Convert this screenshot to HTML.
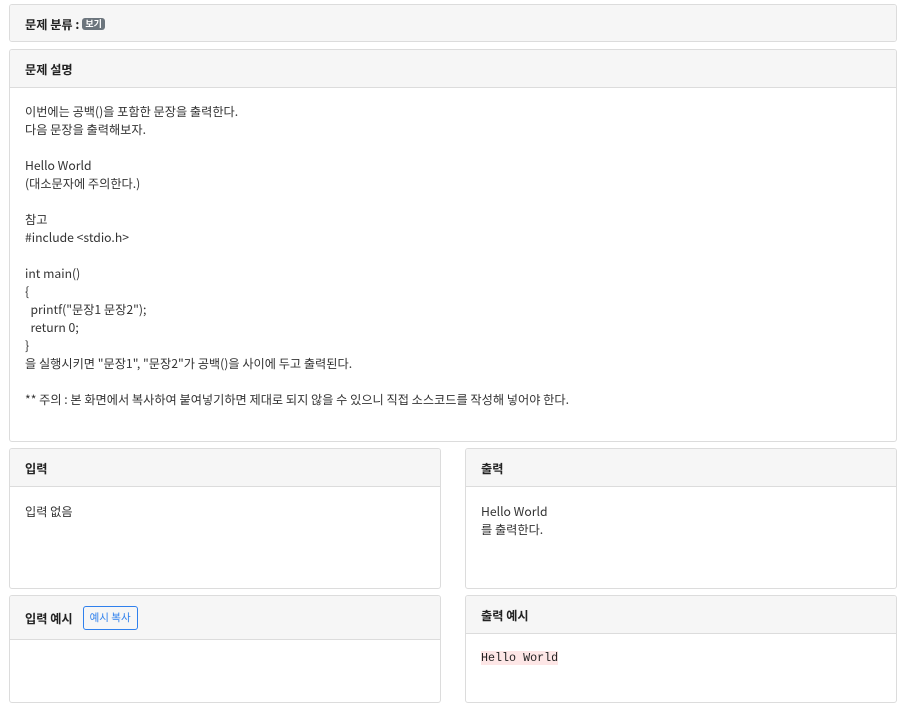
<!DOCTYPE html>
<html><head><meta charset="utf-8"><style>
*{box-sizing:border-box;margin:0;padding:0}
body{width:909px;height:703px;background:#fff;font-family:"Noto Sans CJK KR",sans-serif;font-size:12.2px;color:#333;position:relative;overflow:hidden}
.card{position:absolute;border:1px solid #dcdcdc;border-radius:3px;background:#fff;overflow:hidden}
.hd{background:#f6f6f6;border-bottom:1px solid #dcdcdc;font-weight:bold;color:#222;padding:0 15px;display:flex;align-items:center}
.bd{padding:15px 15px;line-height:18px}
.badge{display:inline-block;background:#6c757d;color:#fff;font-size:9px;padding:0 3px;border-radius:3px;margin-left:3px;line-height:12px}
.btn{display:inline-block;border:1px solid #2f80ed;color:#2f80ed;font-weight:normal;font-size:10.5px;border-radius:3px;padding:0 6px;line-height:22px;margin-left:10px}
.mono{font-family:"Liberation Mono",monospace;font-size:11.7px;background:#fde6e6;color:#222}
</style></head><body>
<div class="card" style="left:9px;top:4px;width:888px;height:38px"><div class="hd" style="height:37px;border:0">문제 분류 :<span class="badge">보기</span></div></div>
<div class="card" style="left:9px;top:49px;width:888px;height:393px">
<div class="hd" style="height:38px">문제 설명</div>
<div class="bd" style="padding-top:14px">이번에는 공백()을 포함한 문장을 출력한다.<br>다음 문장을 출력해보자.<br><br>Hello World<br>(대소문자에 주의한다.)<br><br>참고<br>#include &lt;stdio.h&gt;<br><br>int main()<br>{<br>&nbsp;&nbsp;printf("문장1 문장2");<br>&nbsp;&nbsp;return 0;<br>}<br>을 실행시키면 "문장1", "문장2"가 공백()을 사이에 두고 출력된다.<br><br>** 주의 : 본 화면에서 복사하여 붙여넣기하면 제대로 되지 않을 수 있으니 직접 소스코드를 작성해 넣어야 한다.</div>
</div>
<div class="card" style="left:9px;top:448px;width:432px;height:141px"><div class="hd" style="height:38px">입력</div><div class="bd">입력 없음</div></div>
<div class="card" style="left:465px;top:448px;width:432px;height:141px"><div class="hd" style="height:38px">출력</div><div class="bd">Hello World<br>를 출력한다.</div></div>
<div class="card" style="left:9px;top:595px;width:432px;height:108px"><div class="hd" style="height:44px">입력 예시<span class="btn">예시 복사</span></div></div>
<div class="card" style="left:465px;top:595px;width:432px;height:108px"><div class="hd" style="height:38px">출력 예시</div><div class="bd" style="padding-top:13px"><span class="mono">Hello World</span></div></div>
</body></html>
